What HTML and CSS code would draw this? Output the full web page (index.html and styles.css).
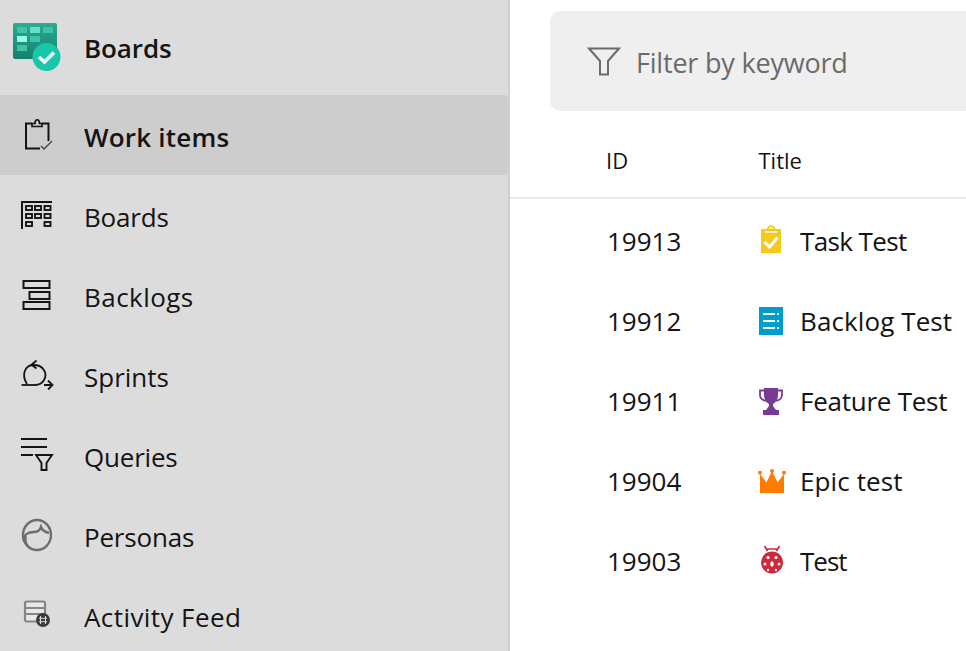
FILE: index.html
```html
<!DOCTYPE html>
<html lang="en">
<head>
<meta charset="utf-8">
<title>Boards</title>
<link rel="stylesheet" href="styles.css">
</head>
<body>
<div class="app">
  <nav class="sidebar">
    <div class="brand">
      <span class="ico-brand">
        <svg width="50" height="50" viewBox="0 0 50 50">
          <defs>
            <linearGradient id="bg" x1="0" y1="0" x2="0" y2="1"><stop offset="0" stop-color="#2bab92"/><stop offset="1" stop-color="#15806e"/></linearGradient>
          </defs>
          <rect x="1" y="0" width="44" height="36" rx="2" fill="url(#bg)"/>
          <rect x="5" y="4" width="10" height="6" fill="#3cc4a6"/>
          <rect x="18" y="4" width="10" height="6" fill="#64e0c8"/>
          <rect x="31" y="4" width="10" height="6" fill="#3cc4a6"/>
          <rect x="5" y="13" width="10" height="6" fill="#98fbe6"/>
          <rect x="18" y="13" width="10" height="6" fill="#3cc4a6"/>
          <rect x="5" y="22" width="10" height="6" fill="#3cc4a6"/>
          <circle cx="34.500" cy="34" r="14" fill="#18c7ab"/>
          <path d="M27 34l5.500 5 9.500-9.500" fill="none" stroke="#eafaf6" stroke-width="3.600"/>
        </svg>
      </span>
      <span class="brand-text">Boards</span>
    </div>
    <a class="item active">
      <span class="ico">
        <svg width="34" height="36" viewBox="0 0 34 36" fill="none" stroke="#141414" stroke-width="2">
          <path d="M20 31.500H6V6.500H12M22 6.500H28.500V24"/>
          <path d="M12 9.500V6.500H15C15 1.500 19.500 1.500 19.500 6.500H22V9.500Z" stroke-width="1.700"/>
          <path d="M21 29l3 3 8-8" stroke-width="1.400" stroke="#444"/>
        </svg>
      </span>
      <span>Work items</span>
    </a>
    <a class="item">
      <span class="ico">
        <svg width="32" height="30" viewBox="0 0 32 30" fill="none" stroke="#141414">
          <path d="M2 29V2H34" stroke-width="2"/>
          <g stroke-width="1.900">
            <rect x="6" y="6" width="6" height="4"/><rect x="15" y="6" width="6" height="4"/><rect x="24.500" y="6" width="6" height="4"/>
            <rect x="6" y="14" width="6" height="4"/><rect x="15" y="14" width="6" height="4"/><rect x="24.500" y="14" width="6" height="4"/>
            <rect x="6" y="22" width="6" height="4"/><rect x="24.500" y="22" width="6" height="4"/>
          </g>
        </svg>
      </span>
      <span>Boards</span>
    </a>
    <a class="item">
      <span class="ico">
        <svg width="32" height="30" viewBox="0 0 32 30" fill="none" stroke="#141414" stroke-width="2">
          <rect x="3.500" y="1" width="26" height="7"/>
          <rect x="9.500" y="12" width="20" height="7"/>
          <rect x="3.500" y="22" width="26" height="7"/>
        </svg>
      </span>
      <span class="t-backlogs">Backlogs</span>
    </a>
    <a class="item">
      <span class="ico">
        <svg width="34" height="32" viewBox="0 0 34 32" fill="none" stroke="#141414" stroke-width="1.800">
          <path d="M15 26H1.500"/>
          <path d="M7 25C1 16 5 6.500 13 6C23 5.500 28 14 24 21C22 24.500 19 26 15 26"/>
          <path d="M16.500 1.500L11.500 5.800L16.500 9.500"/>
          <path d="M24 26H32M28 21.500L32.500 26L28 30.500"/>
        </svg>
      </span>
      <span class="t-sprints">Sprints</span>
    </a>
    <a class="item">
      <span class="ico">
        <svg width="34" height="34" viewBox="0 0 34 34" fill="none" stroke="#141414" stroke-width="1.900">
          <path d="M1 1H27M1 9H27M1 17H13"/>
          <path d="M16 17H32L26.500 25V32H21.500V25Z"/>
        </svg>
      </span>
      <span>Queries</span>
    </a>
    <a class="item">
      <span class="ico">
        <svg width="32" height="34" viewBox="0 0 32 34" fill="none" stroke="#6e6e6e" stroke-width="2.400">
          <ellipse cx="17" cy="17" rx="14" ry="15"/>
          <path d="M4 23C3 16 9 14 14 14C18 14 20 12 21 9C22 12 25 14 29 15"/>
          <path d="M6 18C5 23 7 28 11 31" stroke-width="1.700"/>
        </svg>
      </span>
      <span>Personas</span>
    </a>
    <a class="item">
      <span class="ico">
        <svg width="32" height="30" viewBox="0 0 32 30">
          <rect x="5" y="1.500" width="20" height="20" rx="2" fill="#e8e8e8" stroke="#858585" stroke-width="2.200"/>
          <path d="M5 8H25M5 14H25" stroke="#858585" stroke-width="1.800"/>
          <circle cx="23" cy="20" r="7" fill="#3c3c3c"/>
          <path d="M20.500 16V24M25.500 16V24M19 18.300H27M19 21.700H27" stroke="#dcdcdc" stroke-width="1"/>
        </svg>
      </span>
      <span class="t-feed">Activity Feed</span>
    </a>
  </nav>
  <main class="content">
    <div class="filter">
      <svg class="funnel" width="34" height="30" viewBox="0 0 34 30" fill="none" stroke="#6f6a6a" stroke-width="2">
        <path d="M2 1.500H32L21 14V27.500H13V14Z"/>
      </svg>
      <span>Filter by keyword</span>
    </div>
    <div class="thead">
      <span class="col-id">ID</span>
      <span>Title</span>
    </div>
    <div class="row">
      <span class="col-id">19913</span>
      <span class="wi">
        <svg class="wi-task" width="22" height="29" viewBox="0 0 22 29">
          <path d="M1 4H7C7 -1 15 -1 15 4H21V28H1Z" fill="#f2cb1d"/>
          <path d="M9.300 4a1.700 1.700 0 0 1 3.400 0" fill="none" stroke="#fff" stroke-width="1"/>
          <path d="M5 7H17" stroke="#fff" stroke-width="1.500"/>
          <path d="M4.500 17l5 5L17.500 12.500" fill="none" stroke="#fff" stroke-width="3"/>
        </svg>
      </span>
      <span class="t-task">Task Test</span>
    </div>
    <div class="row">
      <span class="col-id">19912</span>
      <span class="wi">
        <svg width="24" height="28" viewBox="0 0 24 28">
          <rect width="24" height="28" fill="#009ccc"/>
          <path d="M4 7H16M18 7H20M4 14H16M18 14H20M4 21H16M18 21H20" stroke="#fff" stroke-width="2"/>
        </svg>
      </span>
      <span class="t-backlog">Backlog Test</span>
    </div>
    <div class="row">
      <span class="col-id">19911</span>
      <span class="wi">
        <svg class="wi-trophy" width="24" height="28" viewBox="0 0 24 28">
          <path d="M5 0H19V7C19 13 15 15.500 14 16V18L17 22H7L10 18V16C9 15.500 5 13 5 7Z" fill="#773b93"/>
          <path d="M5 2.500H1V7C1 10 3 12 7 13M19 2.500H23V7C23 10 21 12 17 13" fill="none" stroke="#773b93" stroke-width="1.800"/>
          <path d="M4 22H20V27H4Z" fill="#773b93"/>
        </svg>
      </span>
      <span class="t-feature">Feature Test</span>
    </div>
    <div class="row">
      <span class="col-id">19904</span>
      <span class="wi wi-wide">
        <svg width="28" height="24" viewBox="0 0 28 24">
          <path d="M2 24V5L8.500 13.500L14 2L19.500 13.500L26 5V24Z" fill="#ff7b00"/>
          <circle cx="2" cy="3.800" r="2" fill="#ff7b00"/><circle cx="14" cy="2" r="2" fill="#ff7b00"/><circle cx="26" cy="3.800" r="2" fill="#ff7b00"/>
        </svg>
      </span>
      <span class="t-epic">Epic test</span>
    </div>
    <div class="row">
      <span class="col-id">19903</span>
      <span class="wi">
        <svg class="wi-bug" width="24" height="30" viewBox="0 0 24 30">
          <path d="M4.500 1L7.500 6M19.500 1L16.500 6M7 4H17" stroke="#cc293d" stroke-width="1.600" fill="none"/>
          <circle cx="12" cy="17.500" r="11" fill="#cc293d"/>
          <circle cx="8" cy="12.500" r="1.600" fill="#fff"/><circle cx="16" cy="12.500" r="1.600" fill="#fff"/>
          <circle cx="5" cy="19" r="1.500" fill="#fff"/><circle cx="19" cy="19" r="1.500" fill="#fff"/>
          <ellipse cx="12" cy="19" rx="1.700" ry="2.800" fill="#fff"/>
          <circle cx="8" cy="25" r="1.200" fill="#fff"/><circle cx="16" cy="25" r="1.200" fill="#fff"/>
        </svg>
      </span>
      <span class="t-test">Test</span>
    </div>
  </main>
</div>
</body>
</html>
```

FILE: styles.css
```css
* { box-sizing: border-box; }
html, body { margin: 0; height: 100%; overflow: hidden; }
body {
  font-family: "Open Sans", "Noto Sans", sans-serif;
  color: #141414;
  background: #fff;
}
.app { display: flex; height: 651px; }
.sidebar {
  width: 510px;
  flex: none;
  background: #dcdcdc;
  border-right: 2px solid #d0d0d0;
  overflow: hidden;
}
.brand {
  height: 95px;
  display: flex;
  align-items: center;
  font-size: 26px;
  font-weight: 600;
  padding-left: 12px;
}
.ico-brand { width: 72px; height: 50px; display: block; margin-top: 1px; }
.brand-text { letter-spacing: -.1px; }
.item {
  height: 80px;
  display: flex;
  align-items: center;
  padding-top: 4px;
  font-size: 26px;
  letter-spacing: -.2px;
}
.item.active {
  background: #cdcdcd;
  font-weight: 600;
  border-radius: 0 4px 4px 0;
  letter-spacing: .2px;
}
.ico {
  width: 84px;
  flex: none;
  display: flex;
  padding-left: 20px;
  margin-top: -5px;
}
.t-backlogs { letter-spacing: .45px; }
.t-sprints { letter-spacing: 0; }
.t-feed { letter-spacing: .42px; }
.content { flex: 1; min-width: 0; }
.filter {
  margin: 11px 0 0 40px;
  height: 100px;
  background: #efefef;
  border-radius: 10px 0 0 10px;
  display: flex;
  align-items: center;
  padding: 3px 0 0 37px;
  font-size: 27px;
  letter-spacing: -.2px;
  color: #6b6b6b;
}
.funnel { margin-right: 15px; margin-top: -1px; }
.thead {
  height: 88px;
  display: flex;
  align-items: center;
  padding: 11px 0 0 96px;
  font-size: 22px;
  border-bottom: 2px solid #eaeaea;
}
.thead .col-id { width: 152.500px; }
.row {
  height: 80px;
  display: flex;
  align-items: center;
  padding: 3px 0 0 97px;
  font-size: 26px;
  white-space: nowrap;
}
.col-id { width: 152px; flex: none; }
.wi { width: 41px; flex: none; display: flex; align-items: center; }
.wi-wide { margin-left: -1px; width: 42px; }
.wi-task { margin-left: 1px; margin-top: -2px; }
.wi-trophy { margin-top: 3px; }
.wi-bug { margin-left: 1px; margin-top: -2px; }
.t-task { letter-spacing: -.6px; }
.t-backlog { letter-spacing: .1px; }
.t-feature { letter-spacing: -.25px; }
.t-epic { letter-spacing: .1px; }
.t-test { letter-spacing: -1px; }
```
